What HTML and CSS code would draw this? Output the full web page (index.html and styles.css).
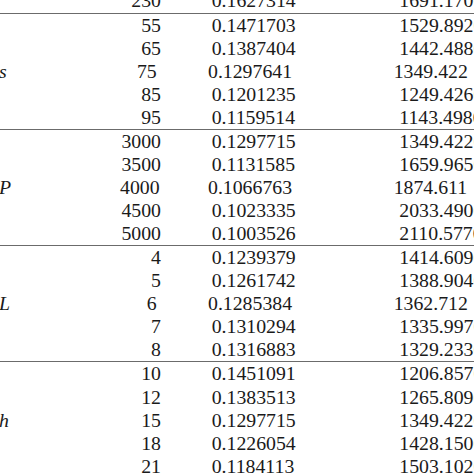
FILE: index.html
```html
<!DOCTYPE html>
<html>
<head>
<meta charset="utf-8">
<link rel="stylesheet" href="styles.css">
</head>
<body>
<div class="table">
  <div class="group first">
    <span class="c1">230</span><span class="c2">0.1627314</span><span class="c3">1691.1706</span>
  </div>
  <div class="group">
    <span class="lab">s</span>
    <span class="c1">55</span><span class="c2">0.1471703</span><span class="c3">1529.8920</span>
    <span class="c1">65</span><span class="c2">0.1387404</span><span class="c3">1442.4880</span>
    <span class="c1 m">75</span><span class="c2 m">0.1297641</span><span class="c3 m">1349.422</span>
    <span class="c1">85</span><span class="c2">0.1201235</span><span class="c3">1249.4260</span>
    <span class="c1">95</span><span class="c2">0.1159514</span><span class="c3">1143.4980</span>
  </div>
  <div class="group">
    <span class="lab">P</span>
    <span class="c1">3000</span><span class="c2">0.1297715</span><span class="c3">1349.4220</span>
    <span class="c1">3500</span><span class="c2">0.1131585</span><span class="c3">1659.9650</span>
    <span class="c1 m">4000</span><span class="c2 m">0.1066763</span><span class="c3 m">1874.611</span>
    <span class="c1">4500</span><span class="c2">0.1023335</span><span class="c3">2033.4900</span>
    <span class="c1">5000</span><span class="c2">0.1003526</span><span class="c3">2110.5770</span>
  </div>
  <div class="group">
    <span class="lab">L</span>
    <span class="c1">4</span><span class="c2">0.1239379</span><span class="c3">1414.6090</span>
    <span class="c1">5</span><span class="c2">0.1261742</span><span class="c3">1388.9040</span>
    <span class="c1 m">6</span><span class="c2 m">0.1285384</span><span class="c3 m">1362.712</span>
    <span class="c1">7</span><span class="c2">0.1310294</span><span class="c3">1335.9970</span>
    <span class="c1">8</span><span class="c2">0.1316883</span><span class="c3">1329.2330</span>
  </div>
  <div class="group">
    <span class="lab">h</span>
    <span class="c1">10</span><span class="c2">0.1451091</span><span class="c3">1206.8570</span>
    <span class="c1">12</span><span class="c2">0.1383513</span><span class="c3">1265.8090</span>
    <span class="c1">15</span><span class="c2">0.1297715</span><span class="c3">1349.4220</span>
    <span class="c1">18</span><span class="c2">0.1226054</span><span class="c3">1428.1500</span>
    <span class="c1">21</span><span class="c2">0.1184113</span><span class="c3">1503.1020</span>
  </div>
</div>
</body>
</html>
```
FILE: styles.css
```css
html, body {
  margin: 0;
  padding: 0;
  background: #ffffff;
}
body {
  width: 474px;
  height: 474px;
  overflow: hidden;
  font-family: "Liberation Serif", "Times New Roman", serif;
  font-size: 19.8px;
  color: #1a1a1a;
}
.table {
  width: 474px;
  overflow: hidden;
}
.group {
  display: grid;
  grid-template-columns: 120px 41px 232px 1fr;
  grid-auto-rows: 23.07px;
  line-height: 23.07px;
  border-top: 1.5px solid #6b6b6b;
  white-space: nowrap;
}
.group.first {
  border-top: none;
  margin-top: -10.55px;
}
.lab {
  grid-column: 1;
  grid-row: 1 / span 5;
  align-self: center;
  font-style: italic;
  margin-left: -1px;
}
.c1 {
  grid-column: 2;
  text-align: right;
}
.c2 {
  grid-column: 3;
  padding-left: 50.7px;
}
.c3 {
  grid-column: 4;
  padding-left: 6.3px;
}
.c1.m {
  padding-right: 4.3px;
}
.c2.m {
  padding-left: 47px;
}
.c3.m {
  padding-left: 0.7px;
}
```
